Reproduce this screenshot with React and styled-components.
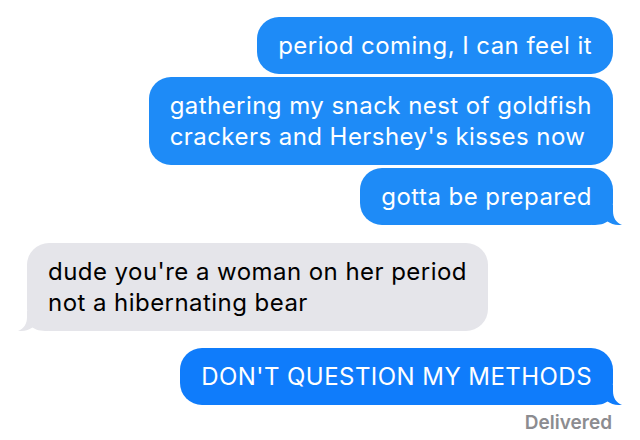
import React from "react";
import styled, { createGlobalStyle } from "styled-components";

const GlobalStyle = createGlobalStyle`
  html, body {
    margin: 0;
    background: #ffffff;
  }
`;

const Thread = styled.div`
  width: 640px;
  height: 440px;
  box-sizing: border-box;
  padding: 17px 27px 0 27px;
  display: flex;
  flex-direction: column;
  font-family: Inter, Roboto, "Noto Sans", sans-serif;
`;

const Group = styled.div`
  display: flex;
  flex-direction: column;
  align-items: ${(p) => (p.$sent ? "flex-end" : "flex-start")};
  gap: 3px;
  margin-bottom: 17.5px;
`;

const Bubble = styled.div`
  position: relative;
  box-sizing: border-box;
  padding: 13px 21px;
  border-radius: 22px;
  background: ${(p) => (p.$sent ? p.$blue || "#1e8bf7" : "#e5e5ea")};
  color: ${(p) => (p.$sent ? "#ffffff" : "#000000")};
  font-size: 24px;
  letter-spacing: 0.45px;
  line-height: 31px;
  white-space: pre-line;
`;

const Tail = styled.svg`
  position: absolute;
  bottom: 0;
  width: 30px;
  height: 20px;
  ${(p) => (p.$left ? "left: -9px; transform: scaleX(-1);" : "right: -9px;")}
`;

const Status = styled.div`
  align-self: flex-end;
  margin-top: -12px;
  padding-right: 1px;
  font-size: 19px;
  font-weight: 600;
  color: #8c8c90;
`;

const BubbleTail = ({ left, color }) => (
  <Tail $left={left} viewBox="0 0 30 20">
    <path
      d="M0 0 H21 V6 C21 13 24 17.5 30 20 C24 20.3 19 19 15.5 16.5 C12 19 8 20 0 20 Z"
      fill={color}
    />
  </Tail>
);

export default function App() {
  return (
    <>
      <GlobalStyle />
      <Thread>
        <Group $sent>
          <Bubble $sent>period coming, I can feel it</Bubble>
          <Bubble $sent>
            {"gathering my snack nest of goldfish\ncrackers and Hershey's kisses now"}
          </Bubble>
          <Bubble $sent>
            gotta be prepared
            <BubbleTail color="#1e8bf7" />
          </Bubble>
        </Group>
        <Group>
          <Bubble>
            {"dude you're a woman on her period\nnot a hibernating bear"}
            <BubbleTail left color="#e5e5ea" />
          </Bubble>
        </Group>
        <Group $sent>
          <Bubble $sent $blue="#0f7cfb">
            DON'T QUESTION MY METHODS
            <BubbleTail color="#0f7cfb" />
          </Bubble>
        </Group>
        <Status>Delivered</Status>
      </Thread>
    </>
  );
}
